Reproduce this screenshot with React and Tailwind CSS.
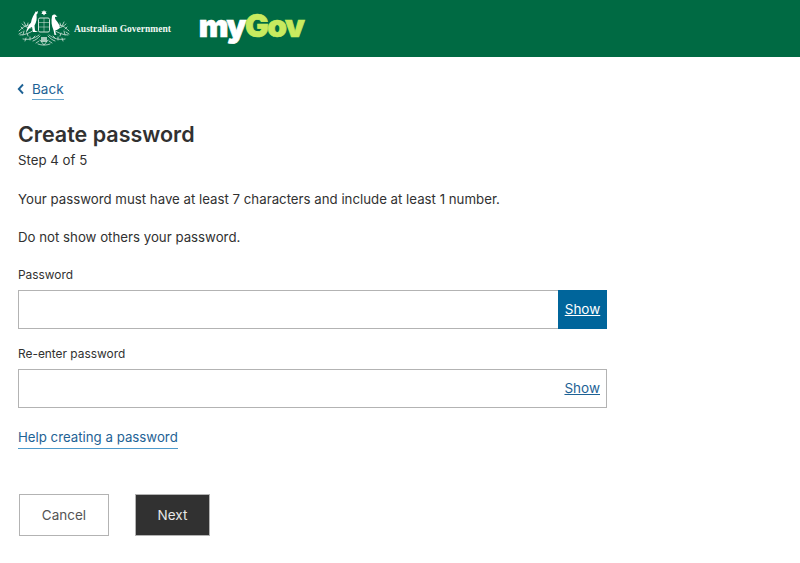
export default function App() {
  return (
    <div className="min-h-[563px] bg-white text-[#313131] font-['Inter','Noto_Sans',sans-serif]">
      <header className="h-[57px] bg-[#006a43] flex items-center pl-[18px]">
        <svg width="52" height="38" viewBox="0 0 52 38" className="shrink-0 mb-[1px]" fill="none">
          <g stroke="#dcebe3" strokeWidth="0.9" strokeLinecap="round" opacity="0.85">
            <path d="M1 22c4-4 8-7 14-6M51 22c-4-4-8-7-14-6M2 26c5 0 10-2 14-5M50 26c-5 0-10-2-14-5M4 15c2 2 5 4 9 4M48 15c-2 2-5 4-9 4M5 30c6 1 11 0 16-4M47 30c-6 1-11 0-16-4" />
            <path d="M3 18l2 2M6 13l2 4M9 17l1-3M1 25l3-2M6 22l-1 4M9 24l1 3M49 18l-2 2M46 13l-2 4M43 17l-1-3M51 25l-3-2M46 22l1 4M43 24l-1 3M12 28l0 3M40 28l0 3M8 29l-1 3M44 29l1 3M15 32c3-1 5-3 7-5M37 32c-3-1-5-3-7-5M17 27l-2 2M35 27l2 2" />
            <path d="M20 35c4 1.500 8 1.500 12 0M22 31l4 5 4-5M18 34l3-2M34 34l-3-2" />
          </g>
          <path d="M18 3l2-1-.5 2.500-1 1c.5 4 0 8-2 11l.5 5 3 1.500h-5l-1-5c-2 0-3.500 2-6 6 .5-4 2.500-8 5-10.500 .5-4 3-8 5-11.500z" fill="#fff" />
          <path d="M34 7c1-2 3.500-2 4-.5l1.500 1-2.500.5c-.5 3 4 5 5 10.500-2 2.500-4 3-5 2.500l1 4.500h2l-3.500.5-1-5c-2-4-2.500-9-1.500-14z" fill="#fff" />
          <rect x="20.500" y="9" width="11" height="14" rx="1.500" stroke="#cfe3d9" strokeWidth="1" />
          <path d="M21 13.500h10M21 18h10M26 9v14" stroke="#cfe3d9" strokeWidth="0.7" opacity="0.8" />
          <path d="M26 1l.8 1.500 1.700-.3-.8 1.500 1 1.300-1.700.1-1 1.400-1-1.400-1.700-.1 1-1.300-.8-1.500 1.700.3z" fill="#fff" />
          <rect x="23" y="28" width="6" height="5" fill="#dcebe3" opacity="0.75" />
        </svg>
        <span className="ml-[4px] mt-[1px] text-[9.5px] font-bold text-[#f1f7f3] whitespace-nowrap font-['Liberation_Serif',serif]">Australian Government</span>
        <span className="ml-[28px] mb-[5px] text-[31.500px] leading-none font-black tracking-[-1.500px] [-webkit-text-stroke:0.7px] whitespace-nowrap font-['Inter',sans-serif]">
          <span className="text-white">my</span><span className="text-[#c8ea5f]">Gov</span>
        </span>
      </header>

      <main className="pl-[18px] pt-[20px]">
        <a className="inline-flex items-center h-[21px] text-[13.500px] text-[#1e6295]">
          <svg width="8" height="12" viewBox="0 0 8 12" className="-ml-[1px] mr-[7px] mb-[1px]" fill="none"><path d="M6 1.500L1.800 6 6 10.500" stroke="#1e6295" strokeWidth="1.900" /></svg>
          <span className="border-b border-[#6aa7cf] leading-[20px] h-[21px]">Back</span>
        </a>

        <h1 className="mt-[20px] text-[21.500px] leading-[26px] font-semibold text-[#313131]">Create password</h1>
        <p className="mt-[5px] text-[13.250px] leading-[17px]">Step 4 of 5</p>
        <p className="mt-[22px] text-[13.250px] leading-[17px]">Your password must have at least 7 characters and include at least 1 number.</p>
        <p className="mt-[21px] text-[13.250px] leading-[17px]">Do not show others your password.</p>

        <label className="block mt-[21px] text-[11.900px] leading-[15px]">Password</label>
        <div className="mt-[8px] w-[589px] h-[39px] flex border border-[#b3b3b3]">
          <div className="flex-1" />
          <button className="w-[49px] -my-[1px] -mr-[1px] h-[39px] bg-[#00659b] text-white text-[13.500px] underline">Show</button>
        </div>

        <label className="block mt-[17px] text-[11.900px] leading-[15px]">Re-enter password</label>
        <div className="mt-[8px] w-[589px] h-[39px] flex items-center justify-end pr-[6px] border border-[#b3b3b3]">
          <button className="text-[13.500px] text-[#1e6295] underline">Show</button>
        </div>

        <a className="inline-block mt-[21px] h-[20px] leading-[17px] text-[13.250px] text-[#1e6295] border-b border-[#4f9acb]">Help creating a password</a>

        <div className="mt-[45px] ml-[1px] flex gap-[26px]">
          <button className="w-[90px] h-[42px] border border-[#b3b3b3] bg-white text-[13.500px] text-[#555]">Cancel</button>
          <button className="w-[75px] h-[42px] border border-[#b3b3b3] bg-[#313131] text-[13.500px] text-[#e8e8e8]">Next</button>
        </div>
      </main>
    </div>
  );
}
